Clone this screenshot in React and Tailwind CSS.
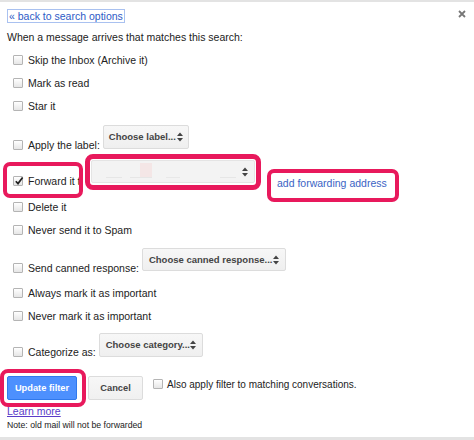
import React from "react";

// small gmail-style checkbox
function Box({ checked }) {
    return (
        <span className="relative inline-block w-[10px] h-[10px] shrink-0 rounded-[1px] border border-[#b4b4b4] bg-linear-to-b from-white to-[#e6e6e6]">
            {checked && (
                <svg className="absolute left-[0px] top-[-1px]" width="10" height="10" viewBox="0 0 10 10">
                    <path d="M1.8 5.2 L4 7.6 L8.6 1.6" fill="none" stroke="#222" strokeWidth="1.7" />
                </svg>
            )}
        </span>
    );
}

function Arrows() {
    return (
        <svg width="6" height="10" viewBox="0 0 6 10" className="shrink-0">
            <polygon points="0,4 3,0.5 6,4" fill="#444" />
            <polygon points="0,6 3,9.5 6,6" fill="#444" />
        </svg>
    );
}

function Select({ label, className }) {
    return (
        <div className={`flex shrink-0 items-center justify-between whitespace-nowrap rounded-[2px] border border-[#dcdcdc] bg-linear-to-b from-[#f7f7f7] to-[#efefef] text-[9.5px] font-bold text-[#444] ${className}`}>
            <span>{label}</span>
            <Arrows />
        </div>
    );
}

function Row({ children }) {
    return (
        <div className="flex items-center h-[23px] pl-[6px] gap-[5px] whitespace-nowrap">
            <Box />
            <span>{children}</span>
        </div>
    );
}

export default function App() {
    return (
        <div className="relative w-[474px] h-[440px] flex flex-col bg-white text-[#222] text-[10.5px] leading-[14px] whitespace-nowrap font-['Liberation_Sans',Arial,sans-serif]">
            <div className="h-[2px] bg-[#e3e3e3]" />

            <div className="flex-1 pl-[7px]">
                {/* back link + close */}
                <div className="mt-[7px] flex items-start justify-between">
                    <span className="h-[14px] border border-[#a9c1f0] px-[1px] leading-[12px] text-[#2d5bc6]">« back to search options</span>
                    <svg className="mr-[8px] mt-[1px]" width="8" height="8" viewBox="0 0 8 8">
                        <path d="M1 1 L7 7 M7 1 L1 7" stroke="#777" strokeWidth="1.8" />
                    </svg>
                </div>

                <div className="mt-[7px] h-[14px]">When a message arrives that matches this search:</div>

                <div className="mt-[4px]">
                    <Row>Skip the Inbox (Archive it)</Row>
                    <Row>Mark as read</Row>
                    <Row>Star it</Row>
                </div>

                {/* apply label */}
                <div className="mt-[8px] flex items-start pl-[6px]">
                    <div className="mt-[13px] flex h-[14px] items-center gap-[5px]">
                        <Box />
                        <span>Apply the label:</span>
                    </div>
                    <Select label="Choose label..." className="ml-[3px] h-[24px] w-[86px] pl-[5px] pr-[5px]" />
                </div>

                {/* forward */}
                <div className="mt-[8px] flex items-start pl-[6px]">
                    <div className="mt-[14px] flex h-[14px] items-center gap-[5px]">
                        <Box checked />
                        <span className="w-[52px] overflow-hidden">Forward it to</span>
                    </div>
                    <div className="relative ml-[11px] flex h-[23px] w-[164px] shrink-0 items-center justify-end rounded-[2px] border border-[#e4e4e4] bg-[#f3f3f3] pr-[6px]">
                        <span className="absolute left-[48px] top-[2px] h-[14px] w-[12px] bg-[#f4e6e6]" />
                        <span className="absolute left-[14px] top-[16px] h-[1px] w-[16px] bg-[#e6e6e6]" />
                        <span className="absolute left-[38px] top-[16px] h-[1px] w-[22px] bg-[#e6e6e6]" />
                        <span className="absolute left-[74px] top-[16px] h-[1px] w-[14px] bg-[#e8e8e8]" />
                        <span className="absolute left-[128px] top-[16px] h-[1px] w-[16px] bg-[#e6e6e6]" />
                        <Arrows />
                    </div>
                    <span className="ml-[22px] mt-[16px] text-[#3a63c4]">add forwarding address</span>
                </div>

                <div className="mt-[5px]">
                    <Row>Delete it</Row>
                    <Row>Never send it to Spam</Row>
                </div>

                {/* canned response */}
                <div className="mt-[7px] flex items-start pl-[6px]">
                    <div className="mt-[13px] flex h-[14px] items-center gap-[5px]">
                        <Box />
                        <span>Send canned response:</span>
                    </div>
                    <Select label="Choose canned response..." className="ml-[3px] h-[23px] w-[144px] pl-[6px] pr-[6px]" />
                </div>

                <div className="mt-[6px]">
                    <Row>Always mark it as important</Row>
                    <Row>Never mark it as important</Row>
                </div>

                {/* category */}
                <div className="mt-[6px] flex items-start pl-[6px]">
                    <div className="mt-[12px] flex h-[14px] items-center gap-[5px]">
                        <Box />
                        <span>Categorize as:</span>
                    </div>
                    <Select label="Choose category..." className="ml-[3px] h-[24px] w-[104px] pl-[6px] pr-[6px]" />
                </div>

                {/* buttons */}
                <div className="mt-[17px] flex items-start">
                    <button className="flex h-[24px] w-[70px] items-center justify-center rounded-[2px] border border-[#3079ed] bg-[#4d90fe] text-[9.3px] font-bold text-white">Update filter</button>
                    <button className="ml-[11px] flex h-[24px] w-[55px] items-center justify-center rounded-[2px] border border-[#dcdcdc] bg-linear-to-b from-[#f7f7f7] to-[#f0f0f0] text-[9.3px] font-bold text-[#444]">Cancel</button>
                    <div className="ml-[10px] mt-[2px]">
                        <Box />
                    </div>
                    <span className="ml-[4px] mt-[2px] text-[10px]">Also apply filter to matching conversations.</span>
                </div>

                <div className="mt-[4px] h-[14px]">
                    <span className="text-[#5a3cc8] underline">Learn more</span>
                </div>
                <div className="mt-[2px] h-[10px] text-[8.7px] leading-[10px]">Note: old mail will not be forwarded</div>
            </div>

            <div className="h-[3px] bg-[#e3e3e3]" />

            {/* pink annotation outlines */}
            <div className="pointer-events-none absolute left-[3px] top-[162px] h-[36px] w-[80px] rounded-[7px] border-[4px] border-[#e8195c]" />
            <div className="pointer-events-none absolute left-[85px] top-[154px] h-[36px] w-[176px] rounded-[8px] border-[5px] border-[#e8195c]" />
            <div className="pointer-events-none absolute left-[267px] top-[169px] h-[33px] w-[132px] rounded-[7px] border-[4px] border-[#e8195c]" />
            <div className="pointer-events-none absolute left-[0px] top-[369px] h-[38px] w-[86px] rounded-[8px] border-[4px] border-[#e8195c]" />
        </div>
    );
}
